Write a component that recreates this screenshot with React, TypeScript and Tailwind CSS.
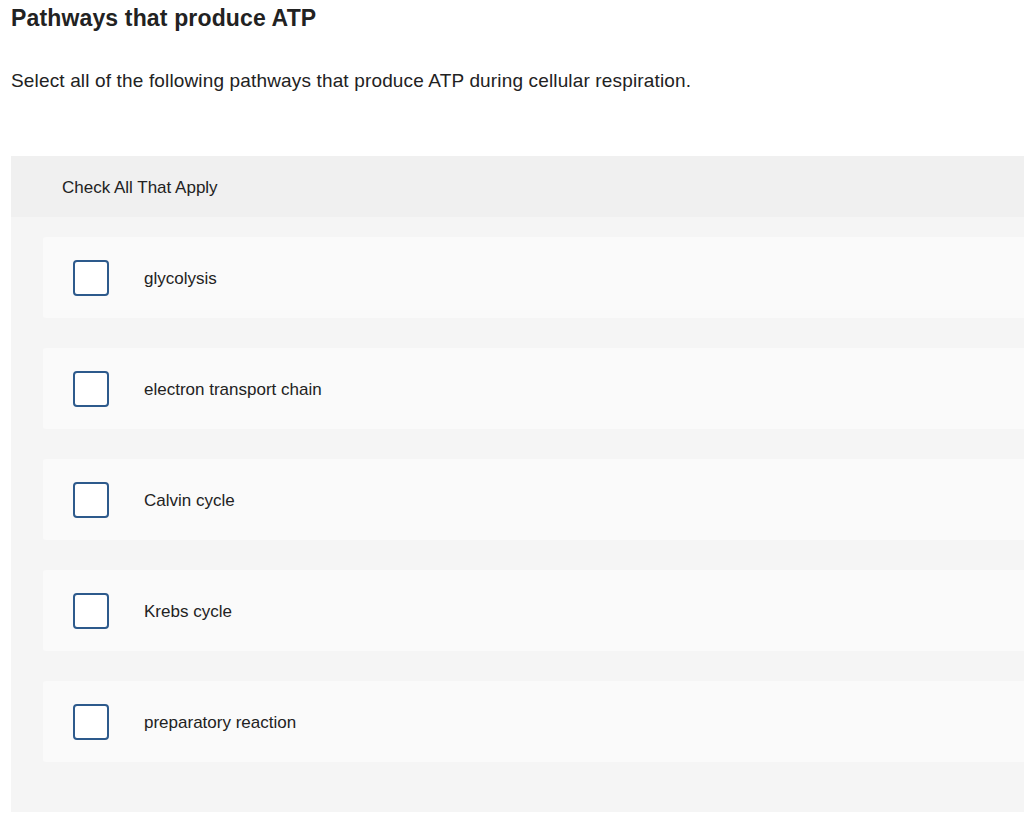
import React from "react";

const options = [
  "glycolysis",
  "electron transport chain",
  "Calvin cycle",
  "Krebs cycle",
  "preparatory reaction",
];

export default function App() {
  return (
    <div className="min-h-[824px] w-[1024px] overflow-hidden bg-white font-['Liberation_Sans',Arial,sans-serif] text-[#222]">
      {/* Title */}
      <h1 className="pl-[11px] pt-[4px] text-[23px] font-bold leading-[28px] tracking-[0.15px] text-[#222]">
        Pathways that produce ATP
      </h1>

      {/* Prompt */}
      <p className="mt-[36px] pl-[11px] text-[19px] leading-[26px] tracking-[0.15px] text-[#222]">
        Select all of the following pathways that produce ATP during cellular respiration.
      </p>

      {/* Question panel */}
      <div className="ml-[11px] mt-[62px] w-[1050px] bg-[#f5f5f5]">
        <div className="flex h-[61px] items-center bg-[#f0f0f0] pl-[51px] pt-[2px] text-[17px]">
          Check All That Apply
        </div>

        <div className="flex flex-col gap-[30px] pb-[50px] pl-[32px] pr-[32px] pt-[20px]">
          {options.map((label) => (
            <label
              key={label}
              className="flex h-[81px] cursor-pointer items-center rounded-[3px] bg-[#fafafa] pl-[30px]"
            >
              <span className="h-[36px] w-[36px] shrink-0 rounded-[4px] border-2 border-[#2d5a8c] bg-white" />
              <span className="ml-[35px] pt-[2px] text-[17px] text-[#222]">{label}</span>
            </label>
          ))}
        </div>
      </div>
    </div>
  );
}
